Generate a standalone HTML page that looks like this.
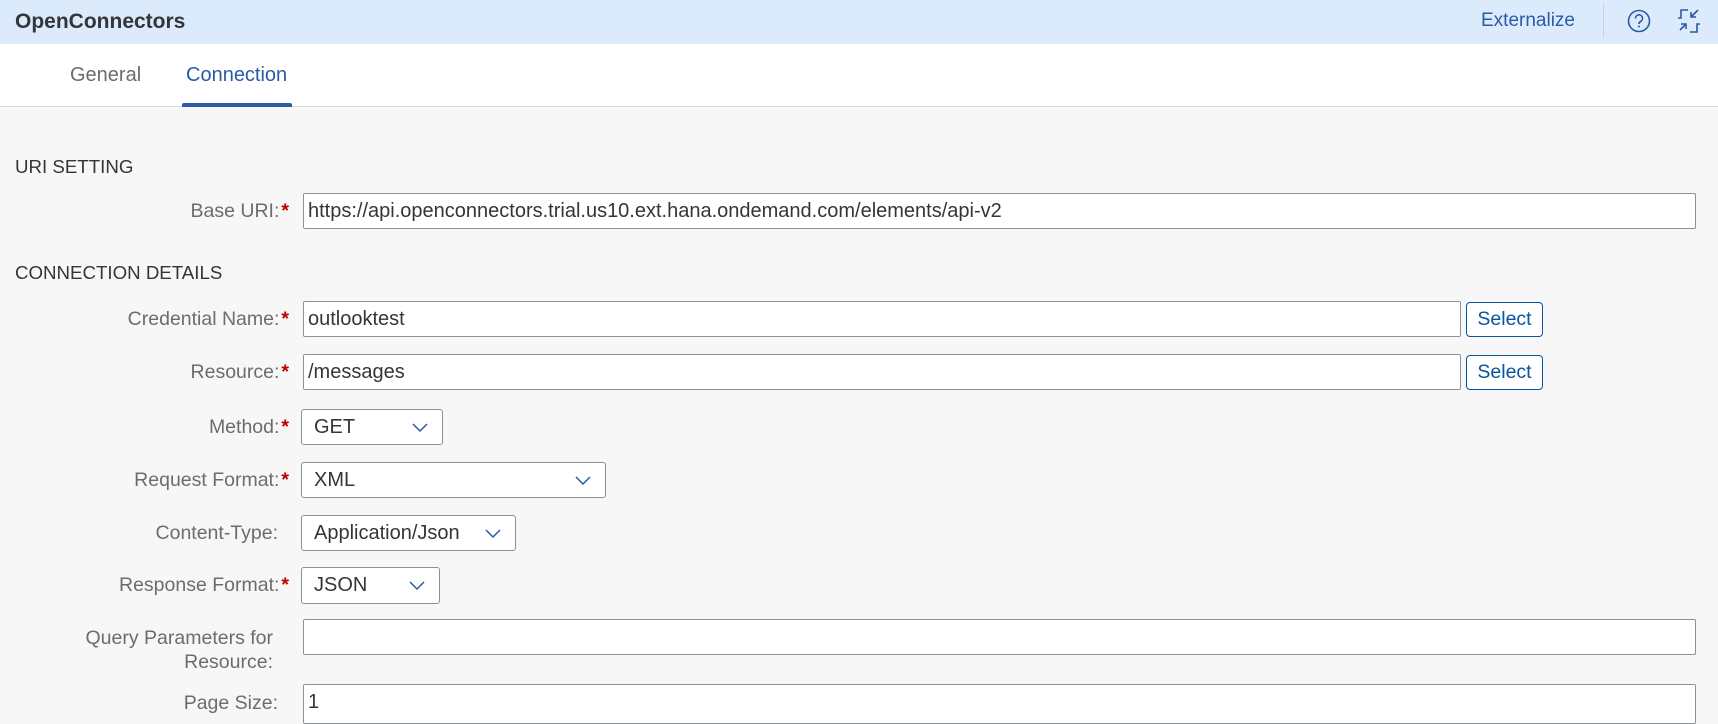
<!DOCTYPE html>
<html><head><style>
*{box-sizing:border-box;margin:0;padding:0}
body{width:1718px;height:717px;overflow:hidden;background:#f7f7f7;font-family:"Liberation Sans",Arial,sans-serif;position:relative;color:#32363a}
.a{position:absolute}
#hdr{left:0;top:0;width:1718px;height:44px;background:#dcebfb}
#tabs{left:0;top:44px;width:1718px;height:63px;background:#fff;border-bottom:1px solid #d9d9d9}
.lbl{position:absolute;right:1429px;font-size:19.5px;color:#6a6d70;text-align:right;white-space:nowrap}
.st{color:#bb0000;font-weight:bold;margin-left:2px}
.inp{position:absolute;background:#fff;border:1px solid #89919a;border-radius:2px;font-size:20px;padding-left:4px;line-height:34px;color:#32363a}
.sel{position:absolute;background:#fff;border:1px solid #89919a;border-radius:3px;font-size:20px;padding-left:12px;line-height:34px}
.sel svg{position:absolute;right:14px;top:13px}
.btn{position:absolute;background:#fff;border:1px solid #0854a0;border-radius:4px;color:#0854a0;font-size:19.5px;text-align:center;line-height:33px}
.sec{position:absolute;left:15px;font-size:18.7px;color:#32363a}
</style></head><body>
<div id="hdr" class="a"></div>
<div class="a" style="left:15px;top:10px;font-size:21px;font-weight:bold;color:#32363a">OpenConnectors</div>
<div class="a" style="left:1481px;top:10px;font-size:19px;color:#2b5aa6">Externalize</div>
<div class="a" style="left:1603px;top:4px;width:1px;height:34px;background:#c5d3e3"></div>
<svg class="a" style="left:1626px;top:8px" width="26" height="26" viewBox="0 0 26 26"><circle cx="13" cy="13" r="10.5" fill="none" stroke="#2b5aa6" stroke-width="1.6"/><path d="M9.5 10.5a3.5 3.5 0 1 1 5 3c-1.2.6-1.5 1.2-1.5 2.5" fill="none" stroke="#2b5aa6" stroke-width="1.6"/><circle cx="13" cy="18.5" r="1" fill="#2b5aa6"/></svg>
<svg class="a" style="left:1676px;top:8px" width="26" height="26" viewBox="0 0 26 26" fill="none" stroke="#2b5aa6" stroke-width="1.6"><path d="M12 2H5v8H2"/><path d="M14 24h7v-8h3"/><path d="M22 2l-7 7M15 4v5h5"/><path d="M4 22l6-6M5 16h5v5"/></svg>
<div id="tabs" class="a"></div>
<div class="a" style="left:70px;top:64px;font-size:20px;color:#6a6d70">General</div>
<div class="a" style="left:186px;top:64px;font-size:20px;color:#2b5aa6">Connection</div>
<div class="a" style="left:182px;top:103px;width:110px;height:4px;background:#2b5aa6;border-radius:2px 2px 0 0"></div>

<div class="sec" style="top:156px">URI SETTING</div>
<div class="lbl" style="top:200px">Base URI:<span class="st">*</span></div>
<div class="inp" style="left:303px;top:193px;width:1393px;height:36px">https://api.openconnectors.trial.us10.ext.hana.ondemand.com/elements/api-v2</div>

<div class="sec" style="top:262px">CONNECTION DETAILS</div>
<div class="lbl" style="top:308px">Credential Name:<span class="st">*</span></div>
<div class="inp" style="left:303px;top:301px;width:1158px;height:36px">outlooktest</div>
<div class="btn" style="left:1466px;top:302px;width:77px;height:35px">Select</div>
<div class="lbl" style="top:361px">Resource:<span class="st">*</span></div>
<div class="inp" style="left:303px;top:354px;width:1158px;height:36px">/messages</div>
<div class="btn" style="left:1466px;top:355px;width:77px;height:35px">Select</div>

<div class="lbl" style="top:416px">Method:<span class="st">*</span></div>
<div class="sel" style="left:301px;top:409px;width:142px;height:36px">GET<svg width="16" height="10"><path d="M1 1l7 7 7-7" fill="none" stroke="#2b5aa6" stroke-width="1.5"/></svg></div>
<div class="lbl" style="top:469px">Request Format:<span class="st">*</span></div>
<div class="sel" style="left:301px;top:462px;width:305px;height:36px">XML<svg width="16" height="10"><path d="M1 1l7 7 7-7" fill="none" stroke="#2b5aa6" stroke-width="1.5"/></svg></div>
<div class="lbl" style="top:522px;right:1440px">Content-Type:</div>
<div class="sel" style="left:301px;top:515px;width:215px;height:36px">Application/Json<svg width="16" height="10"><path d="M1 1l7 7 7-7" fill="none" stroke="#2b5aa6" stroke-width="1.5"/></svg></div>
<div class="lbl" style="top:574px">Response Format:<span class="st">*</span></div>
<div class="sel" style="left:301px;top:567px;width:139px;height:37px">JSON<svg width="16" height="10"><path d="M1 1l7 7 7-7" fill="none" stroke="#2b5aa6" stroke-width="1.5"/></svg></div>

<div class="lbl" style="top:626px;right:1445px;line-height:24px">Query Parameters for<br>Resource:</div>
<div class="inp" style="left:303px;top:619px;width:1393px;height:36px"></div>
<div class="lbl" style="top:692px;right:1440px">Page Size:</div>
<div class="inp" style="left:303px;top:684px;width:1393px;height:40px">1</div>
</body></html>
